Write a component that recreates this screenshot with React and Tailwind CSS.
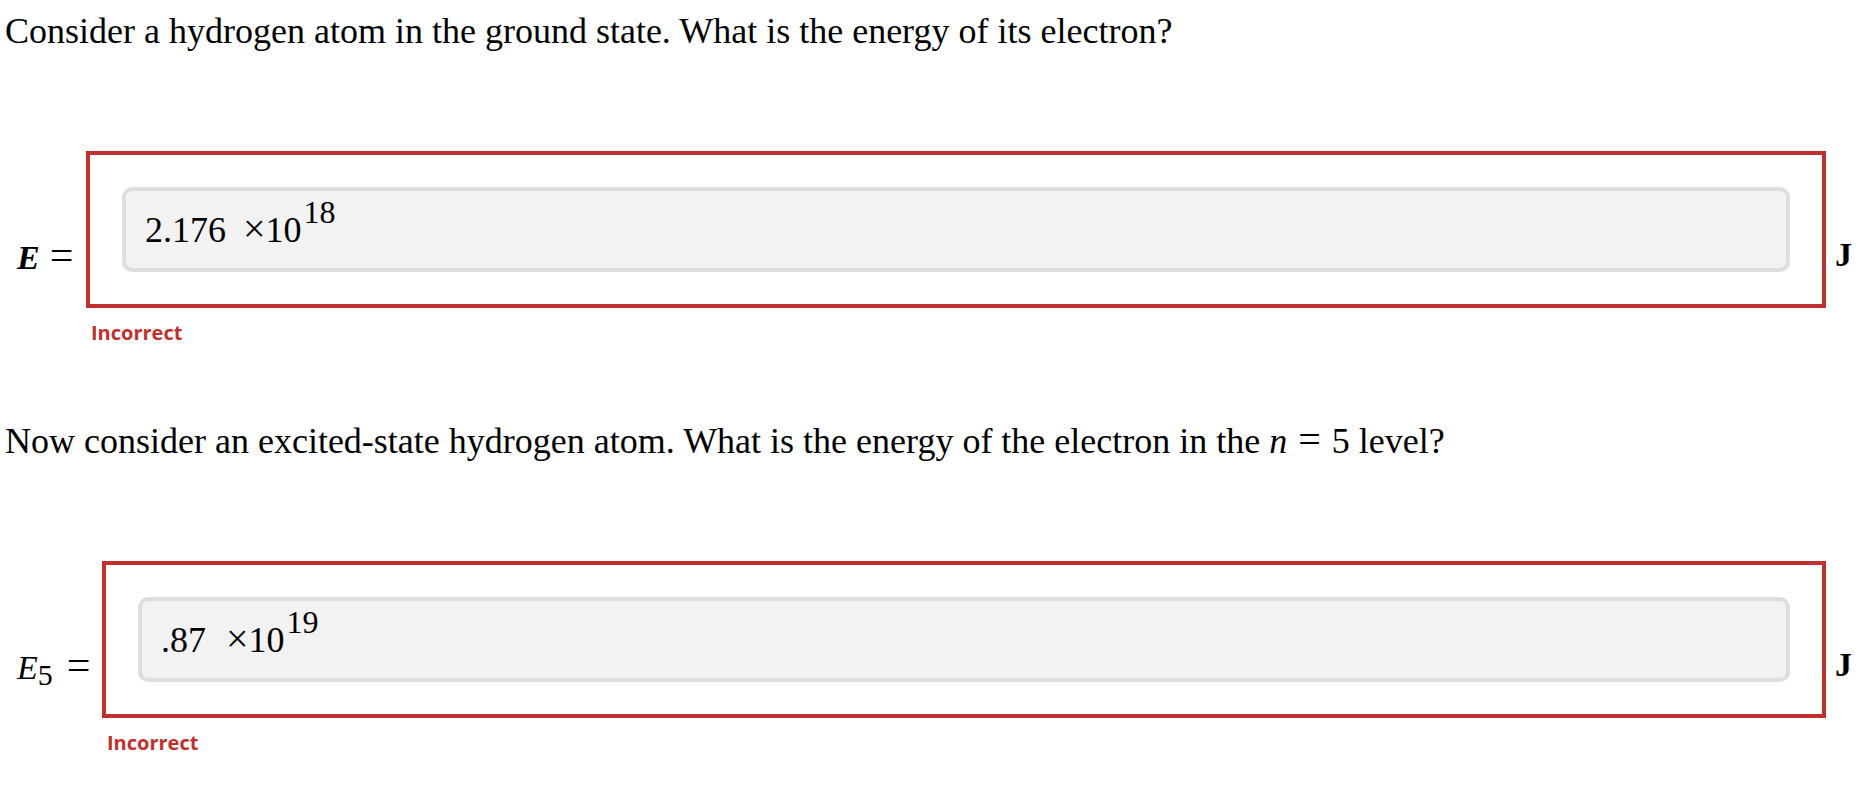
import React from 'react';

const serif = { fontFamily: '"Liberation Serif", "Times New Roman", serif' };
const sans = { fontFamily: '"Open Sans", "Noto Sans", sans-serif' };

const AnswerRow = ({ label, labelWidth, mantissa, exponent, gap }) => (
  <div className="flex items-start">
    <div className={`${labelWidth} shrink-0 pl-[17px] pt-[84px] text-[34px] leading-[40px] text-black`} style={serif}>
      {label}
    </div>
    <div className="flex-1 border-4 border-[#c1302e] p-[32px]">
      <div className="h-[85px] rounded-[10px] border-4 border-[#dedede] bg-[#f2f2f2] pl-[19px] pt-[18px] text-[36px] leading-[40px] text-black" style={serif}>
        <span>{mantissa}</span>
        <span className={gap}>
          <span className="text-[40px]">×</span>10
        </span>
        <span className="relative bottom-[19px] ml-[2px] text-[32px]">{exponent}</span>
      </div>
    </div>
    <div className="w-[42px] shrink-0 pl-[9px] pt-[84px] text-[34px] font-bold leading-[40px] text-black" style={serif}>
      J
    </div>
  </div>
);

const Incorrect = ({ indent }) => (
  <div className={`${indent} mt-[13px] text-[20px] font-bold leading-[24px] text-[#c1302e]`} style={sans}>
    Incorrect
  </div>
);

export default function App() {
  return (
    <div className="min-h-screen w-full bg-white text-black">
      {/* Part 1 */}
      <p className="pl-[5px] pt-[11px] text-[36px] leading-[40px]" style={serif}>
        Consider a hydrogen atom in the ground state. What is the energy of its electron?
      </p>

      <div className="mt-[100px]">
        <AnswerRow
          label={
            <span>
              <i className="font-bold">E</i>
              <span className="ml-[10px] text-[42px]">=</span>
            </span>
          }
          labelWidth="w-[86px]"
          mantissa="2.176"
          exponent="18"
          gap="ml-[17px]"
        />
        <Incorrect indent="pl-[91px]" />
      </div>

      {/* Part 2 */}
      <p className="mt-[75px] pl-[5px] text-[36px] leading-[40px]" style={serif}>
        Now consider an excited-state hydrogen atom. What is the energy of the electron in the{' '}
        <i>n</i>
        <span className="mx-[11px] text-[40px]">=</span>5 level?
      </p>

      <div className="mt-[100px]">
        <AnswerRow
          label={
            <span>
              <i>E</i>
              <span className="relative top-[6px] text-[30px]">5</span>
              <span className="ml-[14px] text-[42px]">=</span>
            </span>
          }
          labelWidth="w-[102px]"
          mantissa=".87"
          exponent="19"
          gap="ml-[20px]"
        />
        <Incorrect indent="pl-[107px]" />
      </div>
    </div>
  );
}
